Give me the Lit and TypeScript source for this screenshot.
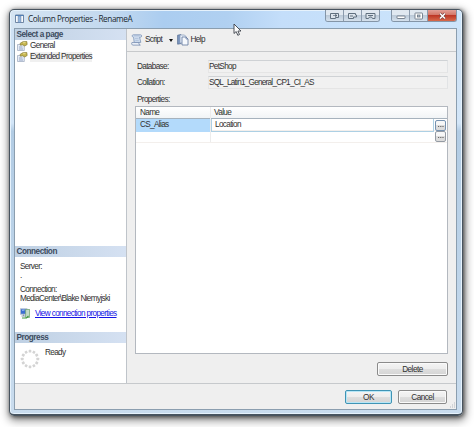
import { LitElement, html, css, svg } from "lit";
import { customElement } from "lit/decorators.js";

const pageIcon = html`<svg class="ic" width="11" height="10" viewBox="0 0 11 10">
  <path d="M.5 3.500h6.800v6H.5z" fill="#e6ecf5" stroke="#a3b0c4" stroke-width=".8"/>
  <path d="M2 6h3.500M2 8h4" stroke="#8296b9" stroke-width=".8"/>
  <path d="M3 2.400 5.800.7 9.800.5 10.200 3.500 7.800 5 5.500 3.800 3.500 4.300z" fill="#c5b44d" stroke="#7c7029" stroke-width=".6"/>
  <path d="M6 1.800 8.500 1.600" stroke="#f3e99c" stroke-width=".8"/></svg>`;

const scriptIcon = html`<svg class="ic" width="12" height="12" viewBox="0 0 12 12">
  <path d="M2.200.8h7.300c1.600 0 1.600 2.400 0 2.400H8.600l1.200 5.200H3.200L2.600 3.200C.8 3.200.8.8 2.200.8z" fill="#d3e0f0" stroke="#7c94b8" stroke-width=".8"/>
  <path d="M.9 8.600h7.200c-.5 1 .1 2.500 1.200 2.500H2C.8 11.100.3 9.600.9 8.600z" fill="#f5f8fc" stroke="#7088ad" stroke-width=".8"/>
  <path d="M4 4.300h3.500M4.300 6.300h3.500M3 1.900h5.500" stroke="#9db2d0" stroke-width=".7"/></svg>`;

const helpIcon = html`<svg class="ic" width="12" height="12" viewBox="0 0 12 12">
  <path d="M.6 1.200 4 .6v9L.6 10.200z" fill="#7e98c0" stroke="#52698f" stroke-width=".7"/>
  <path d="M3 1h4.500L9 2.500V9H3z" fill="#e8eff8" stroke="#8498b7" stroke-width=".7"/>
  <path d="M5 3h4l2 2v6H5z" fill="#f6f9fd" stroke="#5f769d" stroke-width=".8"/>
  <path d="M9 3v2h2" fill="none" stroke="#5f769d" stroke-width=".7"/></svg>`;

const linkIcon = html`<svg class="ic" width="11" height="11" viewBox="0 0 11 11">
  <rect x=".5" y=".8" width="6.500" height="5.400" fill="#3b6ed0" stroke="#b3bfd0" stroke-width=".9"/>
  <path d="M1.500 8h4.500M3.500 6.500V8" stroke="#8795aa"/>
  <rect x="5.700" y="1.500" width="3.800" height="8" fill="#c4dbc8" stroke="#78a878" stroke-width=".8"/>
  <path d="M2 10h4.500l2-2" fill="none" stroke="#409a3e" stroke-width="1.200"/>
  <path d="M2 2.300 4.500 2" stroke="#a9cbfa"/></svg>`;

const spinner = html`<svg class="spin" width="20" height="20" viewBox="0 0 20 20">
  ${Array.from({ length: 12 }, (_, i) => svg`<rect x="8.700" y=".8" width="2.600" height="2.800" rx=".6" fill="#d4d4d4" transform="rotate(${i * 30} 10 10)"/>`)}
</svg>`;

@customElement("app-root")
export class AppRoot extends LitElement {
  static styles = css`
    :host { display: block; width: 474px; height: 427px; overflow: hidden; background: #fff; position: relative;
      font: 8.200px/10px "Liberation Sans", Arial, sans-serif; color: #303030; letter-spacing: -.64px; }
    * { box-sizing: border-box; }
    svg { display: block; flex: none; }
    .window { width: 454px; height: 407px; margin: 9px 0 0 9px; border: 1px solid #48545f; border-bottom-width: 2px;
      border-radius: 5px; padding: 0 5px 4px 4px; display: flex; flex-direction: column;
      background: linear-gradient(90deg, #d5e4f2 0, #c3d9ef 22%, #abcdf0 34%, #b0d0f1 48%, #c4defa 60%, #cde5fb 100%) 0 0 / 100% 19px no-repeat,
        linear-gradient(#cde0f3 0, #d3e6f8 28%, #b2cce4 30%, #c9dcee 100%);
      box-shadow: inset 0 0 0 1px #e6f2fc, 1px 1px 4px rgba(0,0,0,.6), 1px 3px 8px 2px rgba(0,0,0,.4); }
    .title { height: 18px; flex: none; display: flex; align-items: flex-start; }
    .title > svg { margin: 4px 0 0 1px; }
    .caption { font: 8.200px/17px "Open Sans", "Noto Sans", sans-serif; letter-spacing: -.4px; margin-left: 4px; flex: 1; white-space: nowrap; color: #202830; }
    .tools { display: flex; height: 12px; border: 1px solid #8495a7; border-top: 0; border-radius: 0 0 3px 3px; overflow: hidden; }
    .tools span { width: 18px; display: grid; place-items: center; background: linear-gradient(#e0e8f0 0 45%, #bccad8 50%, #d5e1ed); border-right: 1px solid #8b9bad; }
    .tools span:last-child { border-right: 0; width: 17px; }
    .tools.sys { margin-left: 11px; }
    .tools .close:last-child { width: 28px; background: linear-gradient(#e2a097 0, #d37667 45%, #bd3726 50%, #d86a4b); }
    .client { flex: 1; border: 1px solid #8b9eaf; background: #efefef; display: flex; flex-direction: column; min-height: 0; }
    .body { flex: 1; display: flex; min-height: 0; }
    .side { width: 112px; flex: none; background: #fff; border-right: 1px solid #bfc4ca; display: flex; flex-direction: column; }
    .head { height: 11px; flex: none; font-weight: bold; line-height: 11px; padding-left: 1.500px; color: #3c4b5e; background: linear-gradient(90deg, #bed0e3, #d5e1f2); letter-spacing: -.46px; }
    .pages { height: 206px; padding-top: 1px; }
    .page { display: flex; align-items: center; height: 10.500px; gap: 2px; padding-left: 2px; }
    .page b { font-weight: normal; }
    .page .sel { background: #f0f0f0; }
    .conn { height: 75px; padding: 5px 0 0 5px; display: flex; flex-direction: column; white-space: nowrap; }
    .dot { height: 13px; line-height: 8px; }
    .conn .user { line-height: 8px; }
    .link { display: flex; align-items: center; gap: 4px; margin-top: 5px; color: #1414e6; text-decoration: underline; }
    .prog { display: flex; padding: 5px 0 0 5px; gap: 5px; }
    .spin { margin-top: 1px; }
    .main { flex: 1; display: flex; flex-direction: column; min-width: 0; }
    .bar { height: 23px; flex: none; border-bottom: 1px solid #c7c9cb; display: flex; align-items: center; padding-left: 4px; }
    .bar span { margin-left: 2px; }
    .arrow { border: 2.500px solid transparent; border-top: 3px solid #111; border-bottom: 0; margin: 0 4px 0 6.500px; }
    .form { padding: 8px 8px 0 8px; display: flex; flex-direction: column; }
    .field { display: flex; height: 13px; margin-bottom: 3px; line-height: 12px; }
    .field label { width: 73px; padding: 1px 0 0 2px; }
    .field div { flex: 1; border-top: 1px solid #cfd2d5; border-right: 1px solid #e1e3e5; border-left: 1px solid #e6e6e6; border-bottom: 1px solid #e5e5e5; background: #f1f1f1; }
    .field .wide { letter-spacing: -.75px; }
    .props { padding-left: 2px; margin-top: 2px; height: 12px; line-height: 12px; }
    .grid { height: 248px; border: 1px solid #b3b8bf; background: #fff; }
    .row { display: grid; grid-template-columns: 75px 1fr 13px; height: 12px; line-height: 12px; border-bottom: 1px solid #f3efec; }
    .row > div { padding-left: 4px; border-right: 1px solid #ececec; }
    .row > div:nth-child(2) { border-right: 0; padding-left: 3px; }
    .row.hd { border-bottom: 1px solid #a6b2bd; background: linear-gradient(#fff, #f1f4f6); }
    .row.on > div:first-child { background: #b3dafb; }
    .row.on > div:nth-child(2) { border: 1px solid #add0e4; border-top: 0; }
    .more { width: 11px; height: 11px; margin-left: 1px; align-self: center; border: 1px solid #949ba4; border-radius: 2px; background: linear-gradient(#f7f7f7 45%, #dcdcdc 50%); display: grid; place-items: center; }
    .on .more { border-color: #7692b0; }
    .btn { height: 14px; border: 1px solid #8b8b8b; border-radius: 2px; background: linear-gradient(#f4f4f4 0, #ededed 48%, #dedede 52%, #d4d4d4); box-shadow: inset 0 0 0 1px #fafafa; display: grid; place-items: center; line-height: 11px; letter-spacing: -.5px; }
    .del { width: 71px; margin: 8px 8px 0 auto; }
    .foot { height: 26px; flex: none; border-top: 1px solid #c6c9cc; display: flex; justify-content: flex-end; padding: 6px 9px 0 0; gap: 6px; }
    .ok { width: 47px; border-color: #3f94b5; box-shadow: inset 0 0 0 1px #b7e6f6; }
    .cancel { width: 49px; }
    .grip { position: absolute; left: 449px; top: 402px; }
    .cursor { position: absolute; left: 233px; top: 23px; }
  `;

  render() {
    const more = html`<span class="more"><svg width="8" height="5" viewBox="0 0 8 5"><path d="M1 3.500h6" stroke="#666" stroke-width="1" stroke-dasharray="1.200 1"/></svg></span>`;
    return html`
      <div class="window">
        <div class="title">
          <svg width="9" height="10" viewBox="0 0 9 10"><path d="M.5 1h8v7.500h-8z" fill="#f7fafd" stroke="#637b9a" stroke-width=".9"/><path d="M.5 1.500h8" stroke="#5180b6"/><path d="M3.200 2h2.700v6.500H3.200z" fill="#91b5df" stroke="#637fa7" stroke-width=".6"/></svg>
          <div class="caption">Column Properties - RenameA</div>
          <div class="tools">
            <span><svg width="11" height="8" viewBox="0 0 11 8"><path d="M1.500 1.500h8v4h-3v1h-5z" fill="#dce4ec" stroke="#60707f"/><path d="M4 3.500h3M6.500 2.500v2l1.500-1z" stroke="#60707f" stroke-width=".7"/></svg></span>
            <span><svg width="11" height="8" viewBox="0 0 11 8"><path d="M1.500 1.500h7v1.500h1v2h-3v1.500h-5z" fill="#dce4ec" stroke="#60707f"/><path d="M3 4h3" stroke="#60707f"/></svg></span>
            <span><svg width="11" height="8" viewBox="0 0 11 8"><path d="M1 1.500h9V6.500H7.500L6.500 5h-2l-1 1.500H1z" fill="#dce4ec" stroke="#60707f"/><path d="M3 3.500h5" stroke="#60707f"/></svg></span>
          </div>
          <div class="tools sys">
            <span><svg width="10" height="8" viewBox="0 0 10 8"><rect x="1" y="4" width="8" height="2.500" rx=".5" fill="#fff" stroke="#5e6b78" stroke-width=".8"/></svg></span>
            <span><svg width="10" height="8" viewBox="0 0 10 8"><rect x="1" y="1" width="7.500" height="6" rx=".5" fill="#fff" stroke="#5e6b78" stroke-width=".8"/><rect x="3.500" y="3" width="2.500" height="2" fill="#b9c6d4" stroke="#5e6b78" stroke-width=".7"/></svg></span>
            <span class="close"><svg width="9" height="8" viewBox="0 0 9 8"><path d="M2 1.500 7 6.500M7 1.500 2 6.500" stroke="#703b38" stroke-width="2.700"/><path d="M2 1.500 7 6.500M7 1.500 2 6.500" stroke="#fff" stroke-width="1.600"/></svg></span>
          </div>
        </div>
        <div class="client">
          <div class="body">
            <div class="side">
              <div class="head">Select a page</div>
              <div class="pages">
                <div class="page">${pageIcon}<b>General</b></div>
                <div class="page">${pageIcon}<b class="sel">Extended Properties</b></div>
              </div>
              <div class="head">Connection</div>
              <div class="conn">
                <div>Server:</div><div class="dot">.</div>
                <div>Connection:</div><div class="user">MediaCenter\\Blake Niemyjski</div>
                <div class="link">${linkIcon}<span>View connection properties</span></div>
              </div>
              <div class="head">Progress</div>
              <div class="prog">${spinner}<span>Ready</span></div>
            </div>
            <div class="main">
              <div class="bar">${scriptIcon}<span>Script</span><i class="arrow"></i>${helpIcon}<span>Help</span></div>
              <div class="form">
                <div class="field"><label>Database:</label><div>PetShop</div></div>
                <div class="field"><label>Collation:</label><div class="wide">SQL_Latin1_General_CP1_CI_AS</div></div>
                <div class="props">Properties:</div>
                <div class="grid">
                  <div class="row hd"><div>Name</div><div>Value</div></div>
                  <div class="row on"><div>CS_Alias</div><div>Location</div>${more}</div>
                  <div class="row"><div></div><div></div>${more}</div>
                </div>
              </div>
              <div class="btn del">Delete</div>
            </div>
          </div>
          <div class="foot"><div class="btn ok">OK</div><div class="btn cancel">Cancel</div></div>
        </div>
      </div>
      <svg class="grip" width="7" height="7" viewBox="0 0 7 7"><path d="M5 1h1M3 3h1M5 3h1M1 5h1M3 5h1M5 5h1" stroke="#b5b9be"/></svg>
      <svg class="cursor" width="9" height="14" viewBox="0 0 9 14"><path d="M1 1v9.500l2.200-2 1.600 3.800 1.700-.8-1.600-3.500H8z" fill="#fff" stroke="#3a4048" stroke-width=".9"/></svg>
    `;
  }
}
